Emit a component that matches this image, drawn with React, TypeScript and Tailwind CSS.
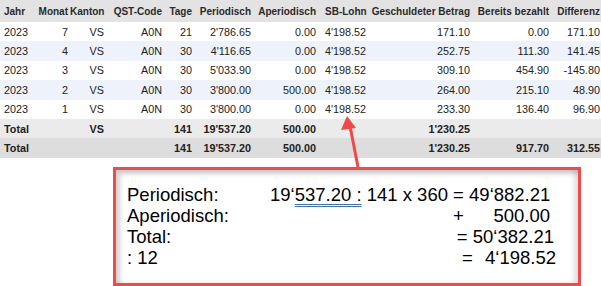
import React from 'react';

type Align = 'left' | 'right';
interface Col {
  label: string;
  width: number;
  align: Align;
  pad: number;
}

const cols: Col[] = [
  { label: 'Jahr', width: 32, align: 'left', pad: 4 },
  { label: 'Monat', width: 38, align: 'right', pad: 2 },
  { label: 'Kanton', width: 38, align: 'right', pad: 4 },
  { label: 'QST-Code', width: 58, align: 'right', pad: 4 },
  { label: 'Tage', width: 30, align: 'right', pad: 4 },
  { label: 'Periodisch', width: 58, align: 'right', pad: 3 },
  { label: 'Aperiodisch', width: 66, align: 'right', pad: 4 },
  { label: 'SB-Lohn', width: 48, align: 'left', pad: 5 },
  { label: 'Geschuldeter Betrag', width: 106, align: 'right', pad: 4 },
  { label: 'Bereits bezahlt', width: 80, align: 'right', pad: 5 },
  { label: 'Differenz', width: 47, align: 'right', pad: 1 },
];

const rows: string[][] = [
  ['2023', '7', 'VS', 'A0N', '21', "2'786.65", '0.00', "4'198.52", '171.10', '0.00', '171.10'],
  ['2023', '4', 'VS', 'A0N', '30', "4'116.65", '0.00', "4'198.52", '252.75', '111.30', '141.45'],
  ['2023', '3', 'VS', 'A0N', '30', "5'033.90", '0.00', "4'198.52", '309.10', '454.90', '-145.80'],
  ['2023', '2', 'VS', 'A0N', '30', "3'800.00", '500.00', "4'198.52", '264.00', '215.10', '48.90'],
  ['2023', '1', 'VS', 'A0N', '30', "3'800.00", '0.00', "4'198.52", '233.30', '136.40', '96.90'],
];

const totals: { bg: string; cells: string[] }[] = [
  { bg: 'bg-[#ebebeb]', cells: ['Total', '', 'VS', '', '141', "19'537.20", '500.00', '', "1'230.25", '', ''] },
  { bg: 'bg-[#dddddd]', cells: ['Total', '', '', '', '141', "19'537.20", '500.00', '', "1'230.25", '917.70', '312.55'] },
];

const Row = ({ cells, className }: { cells: string[]; className: string }) => (
  <div className={`flex items-center ${className}`}>
    {cols.map((c, i) => (
      <div
        key={i}
        className={`shrink-0 whitespace-nowrap ${c.align === 'right' ? 'text-right' : 'text-left'}`}
        style={{ width: c.width, paddingLeft: c.align === 'left' ? c.pad : 0, paddingRight: c.align === 'right' ? c.pad : 0 }}
      >
        {cells[i]}
      </div>
    ))}
  </div>
);

export default function App() {
  return (
    <div className="relative w-[601px] h-[286px] bg-white overflow-hidden text-[#222] font-['Liberation_Sans',Arial,sans-serif]">
      <div className="text-[11px]">
        <Row cells={cols.map((c) => c.label)} className="h-[22px] bg-[#e3e3e3] text-[#2a2a2a] text-[10px] font-bold" />
        {rows.map((r, i) => (
          <Row key={i} cells={r} className={`h-[19.4px] text-[10.8px] ${i % 2 === 1 ? 'bg-[#eef2fa]' : 'bg-white'}`} />
        ))}
        {totals.map((t, i) => (
          <Row key={i} cells={t.cells} className={`h-[19.4px] text-[10.8px] font-bold ${t.bg}`} />
        ))}
      </div>

      <div className="ml-[113px] mt-[9px] w-[468px] h-[119px] border-[3px] border-[#f24a4a] bg-white">
        <div className="h-full shadow-[inset_4px_4px_5px_rgba(0,0,0,0.18),inset_-4px_0_5px_rgba(0,0,0,0.12)] pt-[14px] pl-[11px] text-[18.5px] leading-[21px] text-black">
          <div className="flex">
            <div className="w-[143px] shrink-0">Periodisch:</div>
            <div className="whitespace-nowrap">
              19‘<span className="underline decoration-double decoration-[#3b6fd8] decoration-1 underline-offset-[3px]">537.20 :</span> 141 x 360 = 49‘882.21
            </div>
          </div>
          <div className="flex">
            <div className="w-[143px] shrink-0">Aperiodisch:</div>
            <div className="flex w-[280px]">
              <span className="pl-[183px]">+</span>
              <span className="ml-auto">500.00</span>
            </div>
          </div>
          <div className="flex">
            <div className="w-[143px] shrink-0">Total:</div>
            <div className="w-[284px] text-right whitespace-nowrap">= 50‘382.21</div>
          </div>
          <div className="flex">
            <div className="w-[143px] shrink-0">: 12</div>
            <div className="flex w-[286px]">
              <span className="pl-[192px]">=</span>
              <span className="ml-auto">4‘198.52</span>
            </div>
          </div>
        </div>
      </div>

      <svg className="absolute left-0 top-0 pointer-events-none" width="601" height="286">
        <line x1="358" y1="167" x2="350" y2="126" stroke="#f04848" strokeWidth="3" />
        <polygon points="347,116 341,130 356,128" fill="#f04848" />
      </svg>
    </div>
  );
}
